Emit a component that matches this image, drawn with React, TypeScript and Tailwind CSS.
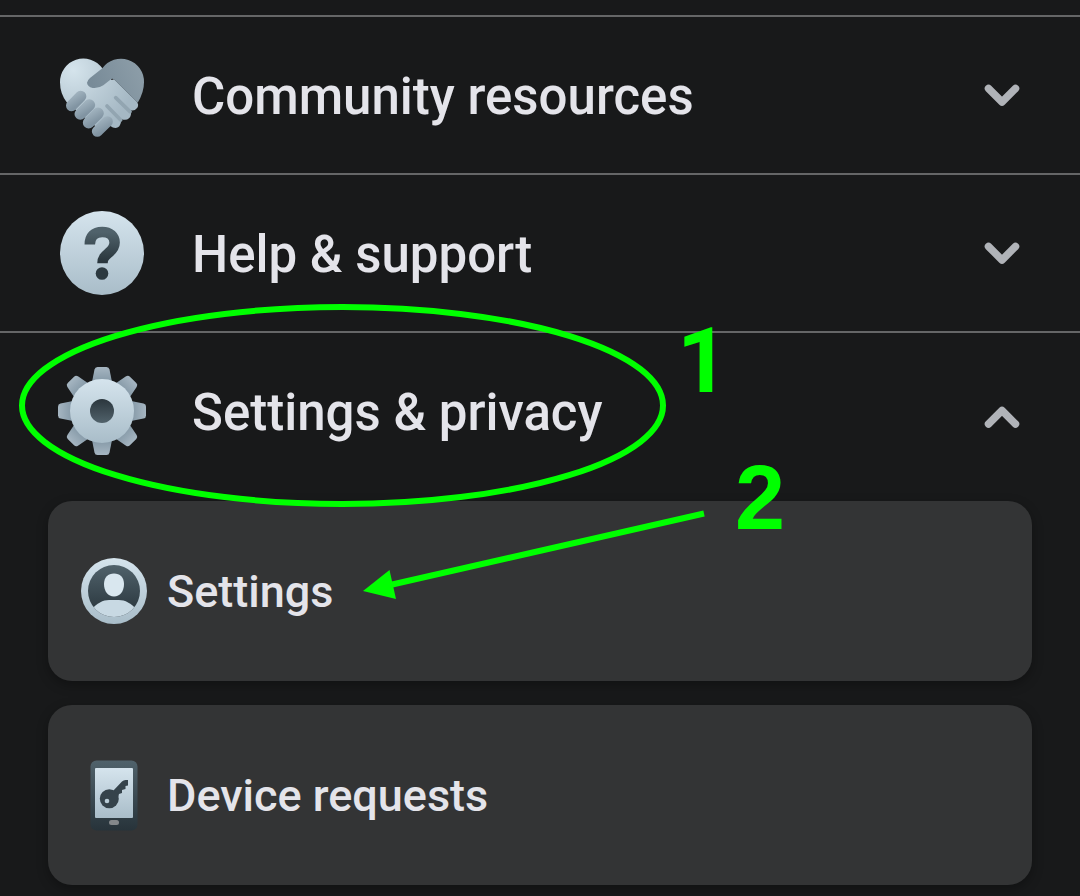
import { useState, type ReactNode } from "react";

function Gradients() {
  return (
    <svg width="0" height="0" className="absolute" aria-hidden="true">
      <defs>
        <linearGradient id="light" x1="0" y1="0" x2="0" y2="1">
          <stop offset="0" stopColor="#d5e4ed" />
          <stop offset="1" stopColor="#a9bdc9" />
        </linearGradient>
        <linearGradient id="steel" x1="0" y1="0" x2="0" y2="1">
          <stop offset="0" stopColor="#a6b6c2" />
          <stop offset="1" stopColor="#8498a6" />
        </linearGradient>
        <linearGradient id="dark" x1="0" y1="0" x2="0" y2="1">
          <stop offset="0" stopColor="#50626b" />
          <stop offset="1" stopColor="#27333a" />
        </linearGradient>
        <linearGradient id="hole" x1="0" y1="0" x2="0" y2="1">
          <stop offset="0" stopColor="#2b363d" />
          <stop offset="1" stopColor="#51626b" />
        </linearGradient>
        <radialGradient id="palm" gradientUnits="userSpaceOnUse" cx="100" cy="90" r="190">
          <stop offset="0" stopColor="#d5e4ec" />
          <stop offset="0.5" stopColor="#bccdd7" />
          <stop offset="1" stopColor="#a5b8c4" />
        </radialGradient>
        <linearGradient id="lobe" gradientUnits="userSpaceOnUse" x1="160" y1="140" x2="290" y2="80">
          <stop offset="0" stopColor="#788b98" />
          <stop offset="1" stopColor="#8b9ca7" />
        </linearGradient>
        <linearGradient id="finger" x1="0" y1="0" x2="0.6" y2="1">
          <stop offset="0" stopColor="#9fb1bd" />
          <stop offset="1" stopColor="#8194a2" />
        </linearGradient>
      </defs>
    </svg>
  );
}

function HandshakeIcon() {
  return (
    <svg viewBox="54 33 264 264" className="size-[88px] shrink-0" aria-hidden="true">
      <path
        d="M60 127 A70 70 0 0 1 187 85 L215 120 L222 118 L289 184 Q298 194 292 203 Q285 213 273 211 Q275 228 267 235 Q258 243 244 237 Q243 257 234 262 Q223 267 211 258 L180 270 L80 187 Q60 160 60 127Z"
        fill="url(#palm)"
      />
      <path
        d="M187 85 A69 69 0 0 1 312 127 Q312 158 293 188 L223 119 Q217 113 211 119 L190 136 Q176 146 158 144 Q142 139 141 128 Q142 121 150 114Z"
        fill="url(#lobe)"
      />
      <g strokeLinecap="round" fill="none">
        <path d="M227 173L270 215M201 198L242 240" stroke="#92a5b1" strokeWidth="11" />
        <path d="M172 274L202 245" stroke="url(#finger)" strokeWidth="33" />
        <path d="M146 248L174 220" stroke="url(#finger)" strokeWidth="35" />
        <path d="M121 222L148 195" stroke="url(#finger)" strokeWidth="35" />
        <path d="M95 197L122 169" stroke="url(#finger)" strokeWidth="34" />
      </g>
    </svg>
  );
}

function HelpIcon() {
  return (
    <svg viewBox="-2 -2 88 88" className="size-[88px] shrink-0" aria-hidden="true">
      <circle cx="42" cy="42" r="42" fill="url(#light)" />
      <path
        d="M29.8 33.5C29.8 25.5 34 21 42.2 21C50 21 54.6 25.5 54.6 31.5C54.6 36 52.5 38.5 49 41.5C45 45 42.5 47 42.5 52.3"
        fill="none"
        stroke="url(#dark)"
        strokeWidth="10.5"
      />
      <circle cx="42" cy="62.5" r="6.3" fill="#2c3940" />
    </svg>
  );
}

function GearIcon() {
  return (
    <svg viewBox="0 0 88 88" className="size-[88px] shrink-0" aria-hidden="true">
      <g fill="url(#steel)">
        {[0, 45, 90, 135, 180, 225, 270, 315].map((angle) => (
          <path
            key={angle}
            d="M39.5 0H48.5Q51 0 51.5 2.5L54 15H34L36.5 2.5Q37 0 39.5 0Z"
            transform={`rotate(${angle} 44 44)`}
          />
        ))}
      </g>
      <circle cx="44" cy="44" r="32" fill="url(#light)" />
      <circle cx="44" cy="44" r="12" fill="url(#hole)" />
    </svg>
  );
}

function ProfileIcon() {
  return (
    <svg viewBox="0 0 66 66" className="size-[66px] shrink-0" aria-hidden="true">
      <clipPath id="portrait">
        <circle cx="33" cy="33" r="26" />
      </clipPath>
      <circle cx="33" cy="33" r="33" fill="url(#light)" />
      <circle cx="33" cy="33" r="26" fill="url(#dark)" />
      <g clipPath="url(#portrait)" fill="#c8d9e3">
        <path d="M33 15.5C39 15.5 43 19.5 43 26C43 33.5 39 38.5 33 38.5S23 33.5 23 26C23 19.5 27 15.5 33 15.5Z" fill="#d9e7ef" />
        <path d="M10 52C16 45 22 42 28 42H38C44 42 50 45 56 52V66H10Z" />
      </g>
    </svg>
  );
}

function DeviceIcon() {
  return (
    <svg viewBox="0 0 66 72" className="h-[72px] w-[66px] shrink-0" aria-hidden="true">
      <rect x="9.5" y="1.5" width="47" height="70" rx="6" fill="url(#dark)" />
      <rect x="14" y="9" width="38" height="50" rx="1" fill="url(#light)" />
      <path
        d="M32 32L41 22.5Q42.5 21 44.5 21H47V26.5L44.5 27V30L41 31V34L38 35L36 42Z"
        fill="#35434b"
      />
      <circle cx="28.3" cy="39.7" r="9.5" fill="#35434b" />
      <circle cx="26" cy="42" r="2.3" fill="#b9ccd7" />
      <rect x="28" y="61" width="10" height="5" rx="2.5" fill="#84888b" />
    </svg>
  );
}

function Chevron({ open }: { open: boolean }) {
  return (
    <svg viewBox="0 0 36 36" className="size-9 shrink-0" aria-hidden="true">
      <path
        d={open ? "M4.5 31L18 17.5L31.5 31" : "M4.5 11.5L18 25L31.5 11.5"}
        fill="none"
        stroke="#b0b3b8"
        strokeWidth="7.5"
        strokeLinecap="round"
        strokeLinejoin="round"
      />
    </svg>
  );
}

type SectionProps = {
  title: string;
  icon: ReactNode;
  defaultOpen?: boolean;
  children?: ReactNode;
};

function Section({ title, icon, defaultOpen = false, children }: SectionProps) {
  const [open, setOpen] = useState(defaultOpen);

  return (
    <section className="border-t-2 border-[#656667]">
      <h2>
        <button
          type="button"
          aria-expanded={open}
          onClick={() => setOpen(!open)}
          className="flex h-[156px] w-full items-center gap-[46px] pr-[60px] pl-[58px] text-left"
        >
          {icon}
          <span className="flex-1 pt-1 text-[51px] leading-[60px] font-medium">{title}</span>
          <Chevron open={open} />
        </button>
      </h2>
      {open && children}
    </section>
  );
}

function Card({ title, icon }: { title: string; icon: ReactNode }) {
  return (
    <a
      href="#"
      className="flex h-[180px] items-center gap-5 rounded-3xl bg-[#333435] px-[33px] shadow-[0_4px_12px_rgba(0,0,0,0.3)]"
    >
      {icon}
      <span className="pt-0.5 text-[45px] leading-[52px] font-medium">{title}</span>
    </a>
  );
}

// Numbered tutorial marks drawn over the menu
function Annotations() {
  return (
    <div className="pointer-events-none absolute top-0 left-0 text-[90px] leading-[100px] font-bold text-[#00ff00]">
      <svg width="800" height="640" viewBox="0 0 800 640" aria-hidden="true">
        <ellipse cx="342.5" cy="405.5" rx="320.5" ry="98.5" fill="none" stroke="currentColor" strokeWidth="6" />
        <path d="M704 513.5L390 585" stroke="currentColor" strokeWidth="6" />
        <path d="M363 591L389.5 570L396 599Z" fill="currentColor" />
      </svg>
      <span className="absolute top-[312px] left-[677px]">1</span>
      <span className="absolute top-[448px] left-[735px] font-['Liberation_Sans',sans-serif]">2</span>
    </div>
  );
}

export default function App() {
  return (
    <div className="relative min-h-screen overflow-hidden bg-[#18191a] pt-[15px] font-[Roboto,sans-serif] text-[#e4e4ea]">
      <Gradients />
      <main>
        <Section title="Community resources" icon={<HandshakeIcon />} />
        <Section title="Help & support" icon={<HelpIcon />} />
        <Section title="Settings & privacy" icon={<GearIcon />} defaultOpen>
          <div className="flex flex-col gap-6 px-12 pt-3 pb-2">
            <Card title="Settings" icon={<ProfileIcon />} />
            <Card title="Device requests" icon={<DeviceIcon />} />
          </div>
        </Section>
      </main>
      <Annotations />
    </div>
  );
}
